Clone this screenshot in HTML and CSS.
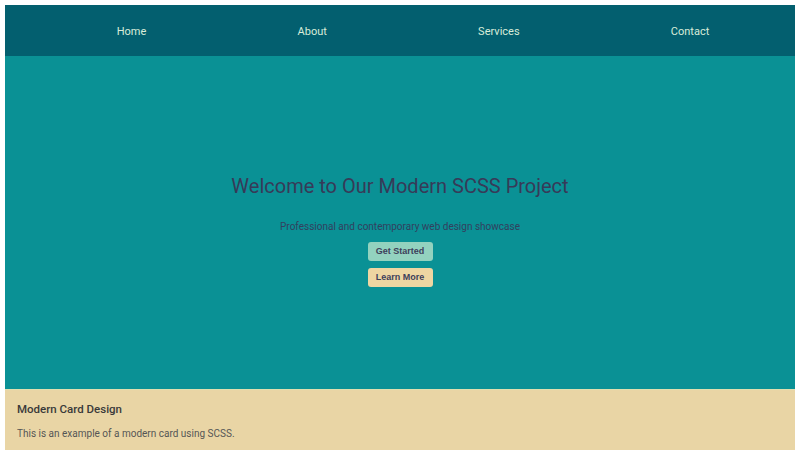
FILE: index.html
```html
<!DOCTYPE html>
<html lang="en">
<head>
<meta charset="utf-8">
<title>Modern SCSS Project</title>
<link rel="stylesheet" href="styles.css">
</head>
<body>
<nav class="nav">
  <ul class="nav-list">
    <li><a href="#">Home</a></li>
    <li><a href="#">About</a></li>
    <li><a href="#">Services</a></li>
    <li><a href="#">Contact</a></li>
  </ul>
</nav>
<section class="hero">
  <h1 class="hero-title">Welcome to Our Modern SCSS Project</h1>
  <p class="hero-sub">Professional and contemporary web design showcase</p>
  <button class="btn btn-primary">Get Started</button>
  <button class="btn btn-secondary">Learn More</button>
</section>
<section class="card">
  <h2 class="card-title">Modern Card Design</h2>
  <p class="card-text">This is an example of a modern card using SCSS.</p>
</section>
</body>
</html>
```
FILE: styles.css
```css
html, body {
  margin: 0;
  padding: 0;
}
body {
  margin: 5px;
  font-family: Roboto, "Liberation Sans", sans-serif;
  background: #ffffff;
  overflow: hidden;
}
.nav {
  background: #035f6f;
  height: 51px;
  padding-bottom: 2px;
  box-sizing: border-box;
  display: flex;
  align-items: center;
}
.nav-list {
  list-style: none;
  margin: 0;
  padding: 0 10px 0 36px;
  width: 100%;
  display: flex;
  justify-content: space-around;
}
.nav-list a {
  color: #d9ecd9;
  text-decoration: none;
  font-size: 11px;
}
.hero {
  background: #0a9195;
  height: 333px;
  display: flex;
  flex-direction: column;
  align-items: center;
  justify-content: center;
  padding-top: 15px;
  box-sizing: border-box;
}
.hero-title {
  margin: 0 0 23px;
  font-size: 20px;
  font-weight: 400;
  color: #373a58;
}
.hero-sub {
  margin: 0 0 10px;
  font-size: 10px;
  color: #33405e;
}
.btn {
  font-family: "Liberation Sans", Arial, sans-serif;
  font-weight: 700;
  font-size: 9px;
  color: #3d405b;
  border: none;
  border-radius: 3px;
  width: 65px;
  height: 19px;
  padding: 0;
  margin: 0 0 7px;
}
.btn-primary {
  background: #93d2bf;
}
.btn-secondary {
  background: #eed6a2;
  margin-bottom: 0;
}
.card {
  background: #e9d5a5;
  border-top: 1px solid #dfe0b0;
  padding: 12px 12px 0;
  height: 60px;
}
.card-title {
  margin: 0 0 12px;
  font-size: 11.5px;
  font-weight: 500;
  color: #3a3a3a;
}
.card-text {
  margin: 0;
  font-size: 10px;
  color: #555555;
}
```
